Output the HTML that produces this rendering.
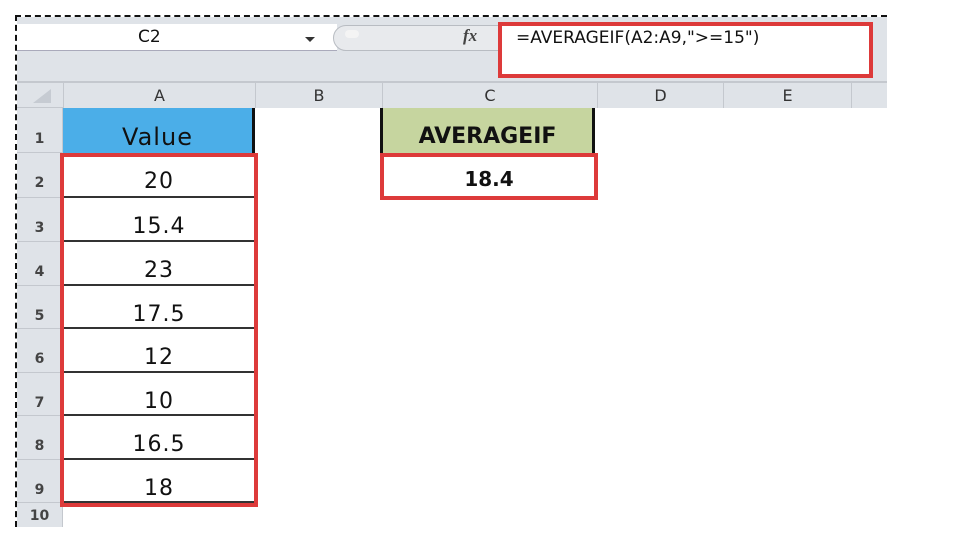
<!DOCTYPE html>
<html><head><style>
body{margin:0;width:972px;height:544px;background:#fff;position:relative;overflow:hidden;font-family:"DejaVu Sans","Liberation Sans",sans-serif}
.a{position:absolute;box-sizing:border-box}
.hd{background:#dfe3e8;color:#333;font-size:16px;text-align:center}
.rn{background:#dfe3e8;color:#444;font-size:14px;font-weight:bold;text-align:center;border-bottom:1px solid #c4c8ce;border-right:1px solid #c4c8ce}
.v{text-align:center;font-size:22px;letter-spacing:1px;color:#111;border-bottom:2px solid #333;left:63px;width:192px}
</style></head><body>
<div class="a" style="left:15px;top:15px;width:872px;height:512px;border-top:2px dashed #111;border-left:2px dashed #111"></div>
<div class="a" style="left:17px;top:17px;width:870px;height:66px;background:#dfe3e8;border-bottom:2px solid #c4c8ce"></div>
<div class="a" style="left:17px;top:24px;width:320px;height:27px;background:#fff;border-bottom:1px solid #aab"></div>
<div class="a" style="left:138px;top:27px;font-size:17px;color:#111">C2</div>
<div class="a" style="left:305px;top:37px;width:0;height:0;border-left:5px solid transparent;border-right:5px solid transparent;border-top:5px solid #333"></div>
<div class="a" style="left:333px;top:25px;width:170px;height:26px;background:#e8eaed;border:1px solid #b8bcc2;border-radius:13px 0 0 13px"></div>
<div class="a" style="left:345px;top:30px;width:14px;height:8px;background:#f4f4f4;border-radius:4px"></div>
<div class="a" style="left:463px;top:26px;font-size:17px;font-style:italic;font-family:'Liberation Serif',serif;font-weight:bold;color:#444">fx</div>
<div class="a" style="left:498px;top:22px;width:375px;height:56px;background:#fff;border:4px solid #dd3a3a"></div>
<div class="a" style="left:516px;top:28px;font-size:17px;color:#111">=AVERAGEIF(A2:A9,"&gt;=15")</div>
<div class="a hd" style="left:17px;top:83px;width:870px;height:25px;border-bottom:1px solid #c4c8ce"></div>
<div class="a" style="left:33px;top:89px;width:0;height:0;border-left:18px solid transparent;border-bottom:14px solid #c6cbd2"></div>
<div class="a hd" style="left:63px;top:83px;width:192px;height:25px;line-height:25px;border-left:1px solid #c4c8ce">A</div>
<div class="a hd" style="left:255px;top:83px;width:127px;height:25px;line-height:25px;border-left:1px solid #c4c8ce">B</div>
<div class="a hd" style="left:382px;top:83px;width:215px;height:25px;line-height:25px;border-left:1px solid #c4c8ce">C</div>
<div class="a hd" style="left:597px;top:83px;width:126px;height:25px;line-height:25px;border-left:1px solid #c4c8ce">D</div>
<div class="a hd" style="left:723px;top:83px;width:128px;height:25px;line-height:25px;border-left:1px solid #c4c8ce">E</div>
<div class="a hd" style="left:851px;top:83px;width:36px;height:25px;border-left:1px solid #c4c8ce"></div>
<div class="a rn" style="left:17px;top:108px;width:46px;height:45px;line-height:62px">1</div>
<div class="a rn" style="left:17px;top:153px;width:46px;height:45px;line-height:60px">2</div>
<div class="a rn" style="left:17px;top:198px;width:46px;height:44px;line-height:60px">3</div>
<div class="a rn" style="left:17px;top:242px;width:46px;height:44px;line-height:60px">4</div>
<div class="a rn" style="left:17px;top:286px;width:46px;height:43px;line-height:60px">5</div>
<div class="a rn" style="left:17px;top:329px;width:46px;height:44px;line-height:60px">6</div>
<div class="a rn" style="left:17px;top:373px;width:46px;height:43px;line-height:60px">7</div>
<div class="a rn" style="left:17px;top:416px;width:46px;height:44px;line-height:60px">8</div>
<div class="a rn" style="left:17px;top:460px;width:46px;height:43px;line-height:60px">9</div>
<div class="a rn" style="left:17px;top:503px;width:46px;height:24px;line-height:26px;border-bottom:none">10</div>
<div class="a" style="left:63px;top:108px;width:192px;height:45px;background:#4baee8;text-align:center;font-size:24px;letter-spacing:1px;line-height:58px;color:#111;border-right:3px solid #111">Value</div>
<div class="a" style="left:380px;top:108px;width:215px;height:45px;background:#c6d59f;text-align:center;font-size:22px;font-weight:bold;line-height:58px;color:#111;border-left:3px solid #111;border-right:3px solid #111">AVERAGEIF</div>
<div class="a v" style="top:153px;height:45px;line-height:58px">20</div>
<div class="a v" style="top:198px;height:44px;line-height:58px">15.4</div>
<div class="a v" style="top:242px;height:44px;line-height:58px">23</div>
<div class="a v" style="top:286px;height:43px;line-height:58px">17.5</div>
<div class="a v" style="top:329px;height:44px;line-height:58px">12</div>
<div class="a v" style="top:373px;height:43px;line-height:58px">10</div>
<div class="a v" style="top:416px;height:44px;line-height:58px">16.5</div>
<div class="a v" style="top:460px;height:43px;line-height:58px">18</div>
<div class="a" style="left:60px;top:153px;width:198px;height:354px;border:4px solid #dd3a3a"></div>
<div class="a" style="left:380px;top:153px;width:218px;height:47px;border:4px solid #dd3a3a;text-align:center;font-size:20px;font-weight:bold;line-height:44px;color:#111">18.4</div>
</body></html>
